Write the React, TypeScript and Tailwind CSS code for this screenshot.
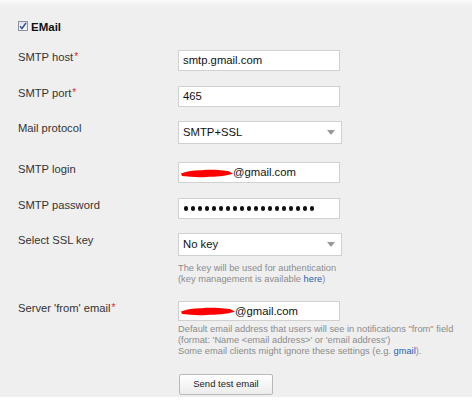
import React from "react";

const font = { fontFamily: '"Liberation Sans", Arial, sans-serif' };

function Label({ text, req }: { text: string; req?: boolean }) {
  return (
    <div className="w-[160px] shrink-0 text-[11.2px] leading-[14px] text-[#333]">
      {text}
      {req && <sup className="text-[#e2232a] text-[10px] relative top-[-1px] ml-[1px]">*</sup>}
    </div>
  );
}

function Box({ children, h = "h-[21px]" }: { children: React.ReactNode; h?: string }) {
  return (
    <div className={`w-[162px] ${h} border border-[#d0d0d0] bg-white pl-[4px] flex items-center text-[11.3px] text-[#111] overflow-hidden whitespace-nowrap`}>
      {children}
    </div>
  );
}

function Select({ value }: { value: string }) {
  return (
    <div className="w-[164px] h-[23px] border border-[#d0d0d0] bg-white pl-[4px] pr-[6px] flex items-center justify-between text-[11.3px] text-[#111]">
      <span>{value}</span>
      <svg width="8" height="5" viewBox="0 0 8 5">
        <path d="M0 0 H8 L4 5 Z" fill="#9a9a9a" />
      </svg>
    </div>
  );
}

function Scribble({ w }: { w: number }) {
  return (
    <svg width={w} height="12" viewBox={`0 0 ${w} 12`} className="shrink-0">
      <path
        d={`M1 6.5 C8 4 14 3 22 3.2 C30 2.5 38 3 ${w - 5} 4 L${w} 6.5 C${w - 8} 9.5 36 9.5 26 10 C18 10.5 10 10 2 9 Z`}
        fill="#ff0000"
      />
    </svg>
  );
}

function Row({ label, req, mt, children }: { label: string; req?: boolean; mt: string; children: React.ReactNode }) {
  return (
    <div className={`flex items-start ${mt}`}>
      <Label text={label} req={req} />
      <div className="flex flex-col">{children}</div>
    </div>
  );
}

export default function App() {
  return (
    <div className="w-[474px] h-[401px] bg-white overflow-hidden" style={font}>
      <div className="w-[472px] h-[397px] bg-[linear-gradient(to_bottom,#fbfbfb_0px,#efefef_6px)] pl-[18px] pt-[20px]">
        <div className="flex items-start gap-[3px] h-[14px]">
          <div className="w-[10px] h-[10px] mt-[1px] border border-[#8e8f9f] bg-[linear-gradient(to_bottom,#e2e2ea,#f8f8fb)] flex items-center justify-center">
            <svg width="8" height="8" viewBox="0 0 8 8">
              <path d="M1 4.2 L3 6.5 L7 0.8" stroke="#2b4f9c" strokeWidth="1.4" fill="none" />
            </svg>
          </div>
          <span className="text-[11.5px] leading-[14px] font-bold text-[#111]">EMail</span>
        </div>

        <Row label="SMTP host" req mt="mt-[16px]">
          <Box>smtp.gmail.com</Box>
        </Row>
        <Row label="SMTP port" req mt="mt-[15px]">
          <Box>465</Box>
        </Row>
        <Row label="Mail protocol" mt="mt-[14px]">
          <Select value="SMTP+SSL" />
        </Row>
        <Row label="SMTP login" mt="mt-[18px]">
          <div className="w-[162px] h-[21px] border border-[#d0d0d0] bg-white pl-[1px] flex items-center text-[11.3px] text-[#111] whitespace-nowrap">
            <Scribble w={53} />
            <span>@gmail.com</span>
          </div>
        </Row>
        <Row label="SMTP password" mt="mt-[15px]">
          <div className="w-[162px] h-[21px] border border-[#d0d0d0] bg-white pl-[5px] flex items-center gap-[2.6px]">
            {Array.from({ length: 19 }).map((_, i) => (
              <span key={i} className="w-[4.4px] h-[4.4px] rounded-full bg-[#111]" />
            ))}
          </div>
        </Row>
        <Row label="Select SSL key" mt="mt-[14px]">
          <Select value="No key" />
          <div className="mt-[7px] text-[9.3px] leading-[11px] text-[#8c8c8c]">
            <div>The key will be used for authentication</div>
            <div>
              (key management is available <span className="text-[#1f5fb0]">here</span>)
            </div>
          </div>
        </Row>
        <Row label="Server 'from' email" req mt="mt-[16px]">
          <div className="w-[162px] h-[20px] border border-[#d0d0d0] bg-white pl-[1px] flex items-center text-[11.3px] text-[#111] whitespace-nowrap">
            <Scribble w={55} />
            <span>@gmail.com</span>
          </div>
          <div className="mt-[3px] text-[9.3px] leading-[11px] text-[#8c8c8c] whitespace-nowrap">
            <div>Default email address that users will see in notifications "from" field</div>
            <div>(format: 'Name &lt;email address&gt;' or 'email address')</div>
            <div>
              Some email clients might ignore these settings (e.g. <span className="text-[#1f5fb0]">gmail</span>).
            </div>
          </div>
        </Row>
        <div className="flex mt-[17px]">
          <div className="w-[161px] shrink-0" />
          <button className="w-[94px] h-[21px] border border-[#b9b9b9] rounded-[2px] bg-[linear-gradient(to_bottom,#ffffff,#ececec)] text-[9.5px] text-[#222] flex items-center justify-center">
            Send test email
          </button>
        </div>
      </div>
    </div>
  );
}
